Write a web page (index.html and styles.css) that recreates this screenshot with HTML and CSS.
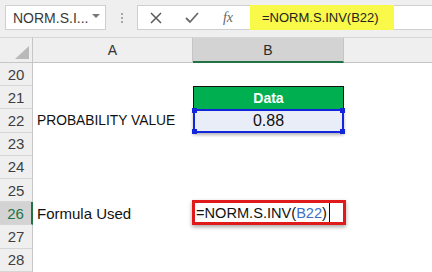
FILE: index.html
```html
<!DOCTYPE html>
<html lang="en">
<head>
  <meta charset="UTF-8" />
  <meta name="viewport" content="width=device-width, initial-scale=1.0"/>
  <title>NORM.S.INV</title>
  <link rel="stylesheet" href="styles.css">
</head>
<body>
<div class="toolbar">
  <div class="name-box">
    <span>NORM.S.I...</span>
    <span class="caret"></span>
  </div>
  <div class="grip"><i></i><i></i><i></i></div>
  <div class="formula-bar">
    <span class="fb-icon">
      <svg width="12" height="12" viewBox="0 0 12 12"><path d="M1 1 L11 11 M11 1 L1 11" stroke="#5a5a5a" stroke-width="1.5" fill="none"/></svg>
    </span>
    <span class="fb-icon">
      <svg width="14" height="12" viewBox="0 0 14 12"><path d="M1 6 L5 10 L13 1" stroke="#6a6a6a" stroke-width="1.8" fill="none"/></svg>
    </span>
    <span class="fb-icon fx">fx</span>
    <span class="formula-text">=NORM.S.INV(B22)</span>
  </div>
</div>

<div class="sheet">
  <!-- column headers -->
  <div class="corner"><span class="tri"></span></div>
  <div class="col-head">A</div>
  <div class="col-head active">B</div>
  <div class="col-head rest"></div>

  <div class="row-head">20</div><div class="cell"></div><div class="cell"></div><div class="cell"></div>
  <div class="row-head">21</div><div class="cell"></div><div class="cell data-head">Data</div><div class="cell"></div>
  <div class="row-head">22</div><div class="cell label caps">PROBABILITY VALUE</div>
  <div class="cell value">
    0.88
    <i class="handle tl"></i><i class="handle tr"></i><i class="handle bl"></i><i class="handle br"></i>
  </div><div class="cell"></div>
  <div class="row-head">23</div><div class="cell"></div><div class="cell"></div><div class="cell"></div>
  <div class="row-head">24</div><div class="cell"></div><div class="cell"></div><div class="cell"></div>
  <div class="row-head">25</div><div class="cell"></div><div class="cell"></div><div class="cell"></div>
  <div class="row-head active">26</div><div class="cell label">Formula Used</div>
  <div class="cell editing">=NORM.S.INV(<span class="ref">B22</span>)<span class="cursor"></span></div><div class="cell"></div>
  <div class="row-head">27</div><div class="cell"></div><div class="cell"></div><div class="cell"></div>
  <div class="row-head">28</div><div class="cell"></div><div class="cell"></div><div class="cell"></div>
</div>
</body>
</html>
```

FILE: styles.css
```css
* {
  box-sizing: border-box;
}
body {
  margin: 0;
  width: 432px;
  height: 272px;
  overflow: hidden;
  font-family: "Liberation Sans", Arial, sans-serif;
  background: #fff;
}
.toolbar {
  display: flex;
  align-items: flex-start;
  height: 37px;
  padding: 5px 0 0 5px;
  background: #efefef;
}
.name-box {
  display: flex;
  align-items: center;
  justify-content: space-between;
  width: 101px;
  height: 25px;
  padding: 0 5px 0 7px;
  background: #fff;
  border: 1px solid #cfcfcf;
  font-size: 14px;
  color: #3a3a3a;
}
.caret {
  width: 0;
  height: 0;
  border-left: 4px solid transparent;
  border-right: 4px solid transparent;
  border-top: 4px solid #777;
  margin-top: -4px;
}
.grip {
  display: flex;
  flex-direction: column;
  gap: 2px;
  width: 31px;
  padding-top: 8px;
  align-items: center;
}
.grip i {
  width: 2px;
  height: 2px;
  background: #a8a8a8;
}
.formula-bar {
  flex: 1;
  display: flex;
  align-items: stretch;
  height: 25px;
  background: #fff;
  border: 1px solid #cfcfcf;
  border-right: none;
}
.fb-icon {
  width: 36px;
  display: flex;
  align-items: center;
  justify-content: center;
}
.fx {
  font-family: "Liberation Serif", "Times New Roman", serif;
  font-style: italic;
  font-size: 14px;
  color: #666;
}
.formula-text {
  margin-left: 4px;
  margin-top: -1px;
  margin-bottom: -1px;
  padding: 0 15px 0 12px;
  display: flex;
  align-items: center;
  background: #f9f94a;
  font-size: 13px;
  color: #222;
}

.sheet {
  display: grid;
  grid-template-columns: 33px 160px 151px 1fr;
  grid-template-rows: 26px;
  grid-auto-rows: 23.2px;
}
.corner {
  position: relative;
  background: #efefef;
  border-top: 1px solid #d6d6d6;
  border-right: 1px solid #c6c6c6;
  border-bottom: 1px solid #c6c6c6;
}
.tri {
  position: absolute;
  right: 3px;
  bottom: 3px;
  width: 0;
  height: 0;
  border-left: 14px solid transparent;
  border-bottom: 13px solid #b9b9b9;
}
.col-head {
  display: flex;
  align-items: center;
  justify-content: center;
  background: #efefef;
  border-top: 1px solid #d6d6d6;
  border-right: 1px solid #c6c6c6;
  border-bottom: 1px solid #c6c6c6;
  font-size: 14px;
  color: #333;
}
.col-head.active {
  background: #d3d3d3;
  border-bottom: 2px solid #217346;
  color: #2a2a2a;
}
.col-head.rest {
  border-right: none;
}
.row-head {
  display: flex;
  align-items: center;
  justify-content: center;
  background: #efefef;
  border-right: 1px solid #c6c6c6;
  border-bottom: 1px solid #d6d6d6;
  font-size: 15px;
  color: #3f3f3f;
}
.row-head.active {
  background: #d3d3d3;
  border-right: 2px solid #217346;
  color: #217346;
}
.cell {
  position: relative;
  display: flex;
  align-items: center;
  background: #fff;
}
.label {
  padding-left: 4px;
  font-size: 15px;
  color: #111;
  white-space: nowrap;
}
.label.caps {
  font-size: 13.8px;
}
.data-head {
  justify-content: center;
  background: #00b050;
  border: 1px solid #111;
  border-bottom: none;
  color: #fff;
  font-weight: bold;
  font-size: 14px;
}
.value {
  justify-content: center;
  background: #e9edf8;
  border: 2px solid #1326db;
  box-shadow: 0 2px 3px rgba(0, 0, 0, 0.3);
  font-size: 16px;
  color: #111;
  z-index: 1;
}
.handle {
  position: absolute;
  width: 5px;
  height: 5px;
  background: #1326db;
}
.handle.tl { left: -3px; top: -3px; }
.handle.tr { right: -3px; top: -3px; }
.handle.bl { left: -3px; bottom: -3px; }
.handle.br { right: -3px; bottom: -3px; }
.editing {
  margin: -2px -2px 0 -1px;
  padding-left: 1px;
  border: 3px solid #e01a1a;
  box-shadow: 0 2px 4px rgba(0, 0, 0, 0.35);
  font-size: 14.6px;
  color: #111;
  white-space: nowrap;
  z-index: 1;
}
.ref {
  color: #3d6fc6;
}
.cursor {
  display: inline-block;
  width: 1px;
  height: 19px;
  margin-left: 2px;
  background: #111;
}
```
